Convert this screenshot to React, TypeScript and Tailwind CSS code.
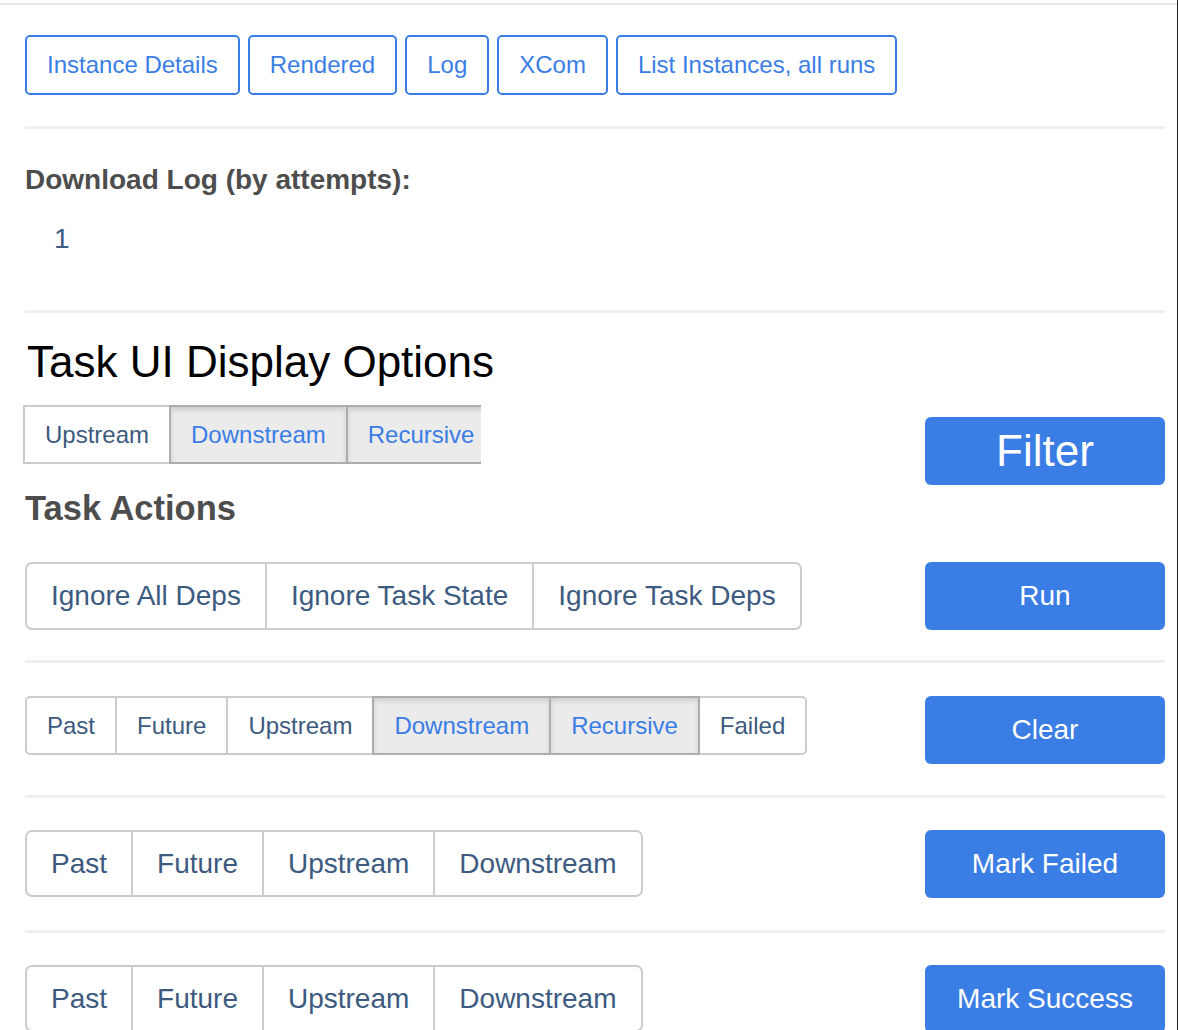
import React from "react";

type Seg = { label: string; active?: boolean };

function Group({
  items,
  size,
  radius,
  height,
}: {
  items: Seg[];
  size: "sm" | "lg";
  radius: "none" | "sm" | "lg";
  height: string;
}) {
  return (
    <div className="flex">
      {items.map((it, i) => {
        const first = i === 0;
        const last = i === items.length - 1;
        let r = "";
        if (radius === "sm") {
          r = first ? "rounded-l-[5px]" : last ? "rounded-r-[5px]" : "";
        } else if (radius === "lg") {
          r = first ? "rounded-l-[7px]" : last ? "rounded-r-[7px]" : "";
        }
        const pad = size === "sm" ? "px-[20px] text-[24px]" : "px-[24px] text-[28px]";
        const state = it.active
          ? "relative z-10 bg-[#ebebeb] border-[#adadad] text-[#3a7de5] shadow-[inset_0_3px_5px_rgba(0,0,0,0.125)]"
          : "bg-white border-[#cccccc] text-[#3d5a80]";
        return (
          <div
            key={i}
            className={`${height} ${pad} ${state} ${r} ${first ? "" : "-ml-[2px]"} flex items-center justify-center whitespace-nowrap border-2 leading-none`}
          >
            {it.label}
          </div>
        );
      })}
    </div>
  );
}

function BlueBtn({ label, big }: { label: string; big?: boolean }) {
  return (
    <div
      className={`flex h-[68px] w-[240px] shrink-0 items-center justify-center rounded-[6px] bg-[#3a7de5] text-white leading-none ${big ? "text-[44px]" : "text-[28px]"}`}
    >
      {label}
    </div>
  );
}

function Hr() {
  return <div className="h-[3px] w-full bg-[#efefef]" />;
}

export default function App() {
  const links = ["Instance Details", "Rendered", "Log", "XCom", "List Instances, all runs"];
  return (
    <div
      className="min-h-[1030px] w-[1178px] border-r border-[#222222] bg-white pt-[3px]"
      style={{ fontFamily: '"Liberation Sans", Arial, Helvetica, sans-serif' }}
    >
      <div className="h-[2px] w-full bg-[#e7e7e7]" />
      <div className="flex flex-col pl-[25px] pr-[12px]">
        <div className="mt-[30px] flex gap-2">
          {links.map((l) => (
            <div
              key={l}
              className="flex h-[60px] items-center rounded-[5px] border-2 border-[#3a7de5] px-[20px] text-[24px] leading-none text-[#3a7de5]"
            >
              {l}
            </div>
          ))}
        </div>

        <div className="mt-[31px]">
          <Hr />
        </div>

        <div className="mt-[34px] text-[28px] font-bold leading-[34px] text-[#4d4d4d]">
          Download Log (by attempts):
        </div>
        <div className="mt-[25px] pl-[29px] text-[28px] leading-[34px] text-[#3d5a80]">1</div>

        <div className="mt-[54px]">
          <Hr />
        </div>

        <div className="mt-[24px] pl-[2px] text-[44px] leading-[50px] text-black">
          Task UI Display Options
        </div>

        <div className="mt-[18px] flex items-start justify-between">
          <div className="flex flex-col">
            <div className="-ml-[2px] w-[458px] overflow-hidden">
              <Group
                size="sm"
                radius="none"
                height="h-[59px]"
                items={[
                  { label: "Upstream" },
                  { label: "Downstream", active: true },
                  { label: "Recursive", active: true },
                ]}
              />
            </div>
            <div className="mt-[24px] text-[34.5px] font-bold leading-[40px] text-[#4d4d4d]">
              Task Actions
            </div>
          </div>
          <div className="mt-[12px]">
            <BlueBtn label="Filter" big />
          </div>
        </div>

        <div className="mt-[34px] flex items-start justify-between">
          <Group
            size="lg"
            radius="lg"
            height="h-[68px]"
            items={[
              { label: "Ignore All Deps" },
              { label: "Ignore Task State" },
              { label: "Ignore Task Deps" },
            ]}
          />
          <BlueBtn label="Run" />
        </div>

        <div className="mt-[30px]">
          <Hr />
        </div>

        <div className="mt-[33px] flex items-start justify-between">
          <Group
            size="sm"
            radius="sm"
            height="h-[59px]"
            items={[
              { label: "Past" },
              { label: "Future" },
              { label: "Upstream" },
              { label: "Downstream", active: true },
              { label: "Recursive", active: true },
              { label: "Failed" },
            ]}
          />
          <BlueBtn label="Clear" />
        </div>

        <div className="mt-[31px]">
          <Hr />
        </div>

        <div className="mt-[32px] flex items-start justify-between">
          <Group
            size="lg"
            radius="lg"
            height="h-[67px]"
            items={[
              { label: "Past" },
              { label: "Future" },
              { label: "Upstream" },
              { label: "Downstream" },
            ]}
          />
          <BlueBtn label="Mark Failed" />
        </div>

        <div className="mt-[32px]">
          <Hr />
        </div>

        <div className="mt-[32px] flex items-start justify-between">
          <Group
            size="lg"
            radius="lg"
            height="h-[67px]"
            items={[
              { label: "Past" },
              { label: "Future" },
              { label: "Upstream" },
              { label: "Downstream" },
            ]}
          />
          <BlueBtn label="Mark Success" />
        </div>
      </div>
    </div>
  );
}
